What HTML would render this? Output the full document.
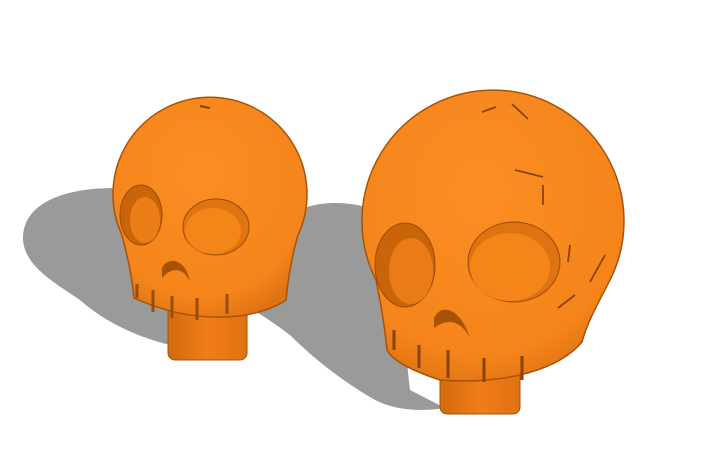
<!DOCTYPE html>
<html><head><style>html,body{margin:0;padding:0;background:#fff;overflow:hidden}</style></head>
<body>
<svg width="725" height="453" viewBox="0 0 725 453" xmlns="http://www.w3.org/2000/svg">
<defs>
<radialGradient id="g1" cx="0.45" cy="0.35" r="0.7"><stop offset="0" stop-color="#fb8d22"/><stop offset="0.8" stop-color="#f5851b"/><stop offset="1" stop-color="#de7212"/></radialGradient>
<linearGradient id="nk" x1="0" x2="1"><stop offset="0" stop-color="#d26a0c"/><stop offset="0.5" stop-color="#f07d18"/><stop offset="1" stop-color="#e07212"/></linearGradient>
</defs>
<rect width="725" height="453" fill="#fff"/>
<!-- shadows -->
<path d="M23 240 C22 205 60 188 115 188 L200 250 L170 345 C130 335 100 318 80 300 C50 280 25 265 23 240Z" fill="#9a9a9a"/>
<path d="M300 210 C320 200 350 202 370 208 L400 300 L410 390 L445 408 C420 412 395 410 375 400 C340 380 310 355 290 335 C270 320 258 312 250 310 L290 260 Z" fill="#9a9a9a"/>
<!-- small skull -->
<rect x="168" y="300" width="79" height="60" rx="7" fill="url(#nk)" stroke="#a85208" stroke-width="1"/>
<path d="M122 235 A97 97 0 1 1 298 235 C292 255 288 280 286 300 C260 318 200 328 134 298 C132 275 127 255 122 235Z" fill="url(#g1)" stroke="#a85208" stroke-width="1.5"/>
<ellipse cx="141" cy="215" rx="21" ry="30" fill="#c96508" stroke="#9a4c08"/>
<ellipse cx="145" cy="220" rx="15" ry="23" fill="#ec7e18"/>
<ellipse cx="216" cy="227" rx="33" ry="28" fill="#df7412" stroke="#9a4c08"/>
<ellipse cx="213" cy="231" rx="28" ry="23" fill="#f48619"/>
<path d="M162 268 C168 256 186 258 190 282 C184 268 172 266 162 278Z" fill="#a85208"/>
<g stroke="#9a4c08" stroke-width="3" fill="none">
<line x1="137" y1="284" x2="137" y2="298"/><line x1="153" y1="290" x2="153" y2="312"/><line x1="172" y1="296" x2="172" y2="318"/><line x1="197" y1="298" x2="197" y2="320"/><line x1="227" y1="294" x2="227" y2="314"/>
</g>
<path d="M200 106 L210 108" stroke="#8a4206" stroke-width="2"/>
<!-- big skull -->
<rect x="440" y="365" width="80" height="49" rx="7" fill="url(#nk)" stroke="#a85208" stroke-width="1"/>
<path d="M376 280 A131 131 0 1 1 610 280 C600 300 588 320 582 342 C560 368 510 385 440 380 C410 370 392 360 387 350 C384 320 380 300 376 280Z" fill="url(#g1)" stroke="#a85208" stroke-width="1.5"/>
<ellipse cx="405" cy="265" rx="30" ry="42" fill="#c96508" stroke="#9a4c08"/>
<ellipse cx="411" cy="271" rx="22" ry="33" fill="#ea7c17"/>
<ellipse cx="514" cy="262" rx="46" ry="40" fill="#de7312" stroke="#9a4c08"/>
<ellipse cx="510" cy="267" rx="40" ry="34" fill="#f48619"/>
<path d="M434 318 C440 304 460 306 470 338 C460 320 448 318 434 328Z" fill="#a85208"/>
<g stroke="#8a4206" stroke-width="3" fill="none">
<line x1="394" y1="330" x2="394" y2="350"/><line x1="419" y1="345" x2="419" y2="368"/><line x1="448" y1="350" x2="448" y2="378"/><line x1="484" y1="358" x2="484" y2="382"/><line x1="522" y1="356" x2="522" y2="380"/>
</g>
<g stroke="#8a4206" stroke-width="1.8" fill="none">
<line x1="482" y1="112" x2="496" y2="107"/><line x1="512" y1="104" x2="528" y2="119"/><line x1="515" y1="170" x2="543" y2="177"/><line x1="543" y1="185" x2="543" y2="205"/><line x1="570" y1="245" x2="568" y2="262"/><line x1="558" y1="308" x2="575" y2="295"/><line x1="605" y1="255" x2="590" y2="282"/>
</g>
</svg>
</body></html>
